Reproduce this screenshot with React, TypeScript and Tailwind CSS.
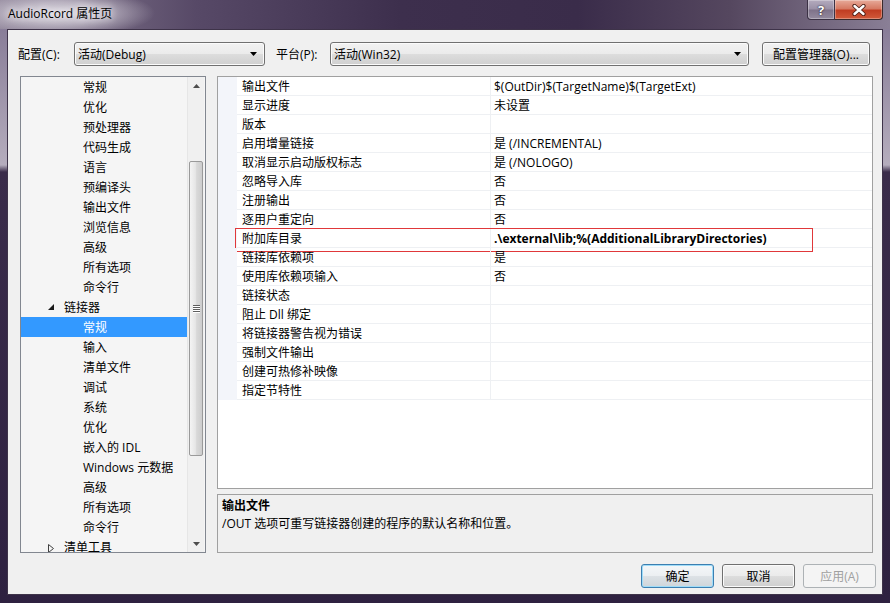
import React from "react";

const FONT = "font-['Open_Sans','Noto_Sans_CJK_SC',sans-serif]";

type TreeItem = { label: string; depth: 1 | 2; open?: boolean; active?: boolean };

const treeItems: TreeItem[] = [
  { label: "常规", depth: 2 },
  { label: "优化", depth: 2 },
  { label: "预处理器", depth: 2 },
  { label: "代码生成", depth: 2 },
  { label: "语言", depth: 2 },
  { label: "预编译头", depth: 2 },
  { label: "输出文件", depth: 2 },
  { label: "浏览信息", depth: 2 },
  { label: "高级", depth: 2 },
  { label: "所有选项", depth: 2 },
  { label: "命令行", depth: 2 },
  { label: "链接器", depth: 1, open: true },
  { label: "常规", depth: 2, active: true },
  { label: "输入", depth: 2 },
  { label: "清单文件", depth: 2 },
  { label: "调试", depth: 2 },
  { label: "系统", depth: 2 },
  { label: "优化", depth: 2 },
  { label: "嵌入的 IDL", depth: 2 },
  { label: "Windows 元数据", depth: 2 },
  { label: "高级", depth: 2 },
  { label: "所有选项", depth: 2 },
  { label: "命令行", depth: 2 },
  { label: "清单工具", depth: 1, open: false },
];

const props: [string, string][] = [
  ["输出文件", "$(OutDir)$(TargetName)$(TargetExt)"],
  ["显示进度", "未设置"],
  ["版本", ""],
  ["启用增量链接", "是 (/INCREMENTAL)"],
  ["取消显示启动版权标志", "是 (/NOLOGO)"],
  ["忽略导入库", "否"],
  ["注册输出", "否"],
  ["逐用户重定向", "否"],
  ["附加库目录", ".\\external\\lib;%(AdditionalLibraryDirectories)"],
  ["链接库依赖项", "是"],
  ["使用库依赖项输入", "否"],
  ["链接状态", ""],
  ["阻止 Dll 绑定", ""],
  ["将链接器警告视为错误", ""],
  ["强制文件输出", ""],
  ["创建可热修补映像", ""],
  ["指定节特性", ""],
];

// row index in the grid that is being edited
const EDIT_ROW = 8;

function DropArrow() {
  return (
    <svg width="7" height="4" viewBox="0 0 7 4">
      <path d="M0 0h7L3.5 4z" fill="#000" />
    </svg>
  );
}

function Combo({ value, width }: { value: string; width: string }) {
  return (
    <div
      className={`flex h-[24px] ${width} items-center justify-between rounded-[3px] border border-[#707070] bg-[linear-gradient(180deg,#f2f2f2_0%,#ebebeb_49%,#dddddd_50%,#cfcfcf_100%)] pl-[3px] pr-[7px] shadow-[inset_0_0_0_1px_#fbfbfb]`}
    >
      <span className="pt-[2px] leading-[18px]">{value}</span>
      <DropArrow />
    </div>
  );
}

function PushButton({
  label,
  kind = "normal",
  width = "w-[73px]",
}: {
  label: string;
  kind?: "normal" | "default" | "disabled";
  width?: string;
}) {
  const look =
    kind === "disabled"
      ? "border-[#adb2b5] bg-[#f4f4f4] text-[#a0a0a0]"
      : kind === "default"
        ? "border-[#3c7fb1] bg-[linear-gradient(180deg,#f4f7f9_0%,#eceff2_49%,#dde2e6_50%,#cfd5da_100%)] shadow-[inset_0_0_0_1px_#9fdcf8] text-black"
        : "border-[#707070] bg-[linear-gradient(180deg,#f2f2f2_0%,#ebebeb_49%,#dddddd_50%,#cfcfcf_100%)] shadow-[inset_0_0_0_1px_#fbfbfb] text-black";
  return (
    <div className={`flex h-[24px] ${width} items-center justify-center rounded-[3px] border ${look}`}>
      <span className="pt-[1px] leading-[18px]">{label}</span>
    </div>
  );
}

function ScrollArrow({ up }: { up?: boolean }) {
  return (
    <div className="flex h-[17px] items-center justify-center">
      <svg width="7" height="4" viewBox="0 0 7 4">
        <path d={up ? "M0 4h7L3.5 0z" : "M0 0h7L3.5 4z"} fill="#4d4d4d" />
      </svg>
    </div>
  );
}

function TreeScrollbar() {
  return (
    <div className="flex w-[17px] shrink-0 flex-col border-l border-[#e6e6e6] bg-[#f0f0f0]">
      <ScrollArrow up />
      <div className="flex-1">
        <div className="mx-[1px] mt-[67px] flex h-[295px] items-center justify-center rounded-[2px] border border-[#9a9a9a] bg-[linear-gradient(90deg,#f4f4f4_0%,#e6e6e6_45%,#d9d9d9_55%,#cdcdcd_100%)]">
          <div className="flex flex-col gap-[1px]">
            {[0, 1, 2, 3].map((i) => (
              <div key={i} className="h-[1px] w-[7px] bg-[#5e5e5e] shadow-[0_1px_0_#ffffff]" />
            ))}
          </div>
        </div>
      </div>
      <ScrollArrow />
    </div>
  );
}

function TreeRow({ item }: { item: TreeItem }) {
  const textColor = item.active ? "text-white" : "text-black";
  return (
    <div
      className={`relative flex h-[20px] items-center ${item.active ? "bg-[#3399ff]" : ""} ${
        item.depth === 1 ? "pl-[43px]" : "pl-[62px]"
      }`}
    >
      {item.depth === 1 && (
        <div className="absolute left-[27px] top-[7px]">
          {item.open ? (
            <svg width="6" height="6" viewBox="0 0 6 6">
              <path d="M6 0v6H0z" fill="#1a1a1a" />
            </svg>
          ) : (
            <svg width="6" height="9" viewBox="0 0 6 9">
              <path d="M0.5 0.5v8l5-4z" fill="none" stroke="#404040" />
            </svg>
          )}
        </div>
      )}
      <span className={`whitespace-nowrap pt-[2px] leading-[18px] ${textColor}`}>{item.label}</span>
    </div>
  );
}

function TreePanel() {
  return (
    <div className="flex h-[477px] w-[186px] shrink-0 border border-[#828790] bg-[#f5f5f5]">
      <div className="w-[166px] overflow-hidden">
        {treeItems.map((item, i) => (
          <TreeRow key={i} item={item} />
        ))}
      </div>
      <TreeScrollbar />
    </div>
  );
}

function PropertyGrid() {
  return (
    <div className="h-[413px] border border-[#a0a0a0] bg-white">
      {props.map(([name, value], i) => (
        <div key={i} className="relative flex h-[19px]">
          <div className="w-[19px] shrink-0 bg-[#f3f5fa]" />
          <div className="w-[254px] shrink-0 whitespace-nowrap border-b border-r border-[#eef0f3] pl-[5px] pt-[1px] leading-[18px]">
            {name}
          </div>
          <div
            className={`flex-1 whitespace-nowrap border-b border-[#eef0f3] pl-[3px] pt-[1px] leading-[18px] ${
              i === EDIT_ROW ? "font-bold" : ""
            }`}
          >
            {value}
          </div>
          {i === EDIT_ROW && (
            <div className="pointer-events-none absolute left-[17px] top-[-1px] h-[24px] w-[578px] border border-[#e0383a]" />
          )}
        </div>
      ))}
    </div>
  );
}

function TitleBar() {
  return (
    <div className="flex h-[29px] items-start justify-between bg-[radial-gradient(ellipse_95px_24px_at_60px_13px,rgba(226,222,230,0.95)_0%,rgba(226,222,230,0.6)_45%,rgba(226,222,230,0)_100%),linear-gradient(90deg,#8e8398_0%,#574967_22%,#3d2f4d_45%,#3a2c4a_65%,#55475f_82%,#8a7f96_100%)]">
      <div className="pl-[8px] pt-[6px] text-[12px] leading-[16px] text-black [text-shadow:0_0_6px_#f2f0f4,0_0_10px_#f2f0f4]">
        AudioRcord 属性页
      </div>
      <div className="mr-[7px] flex h-[20px]">
        <div className="flex w-[28px] items-center justify-center rounded-bl-[4px] border border-t-0 border-[#3b3144] bg-[linear-gradient(180deg,#b4abbe_0%,#9a90a6_48%,#7e7289_52%,#948a9f_100%)] shadow-[inset_0_0_0_1px_rgba(255,255,255,0.3)]">
          <span className="text-[13px] font-bold leading-[14px] text-white [text-shadow:0_0_2px_#2b2233,0_0_1px_#2b2233]">
            ?
          </span>
        </div>
        <div className="flex w-[48px] items-center justify-center rounded-br-[4px] border border-l-0 border-t-0 border-[#3b2a2a] bg-[linear-gradient(180deg,#e7aa99_0%,#d67a63_45%,#c13d22_55%,#d25a3a_100%)] shadow-[inset_0_0_0_1px_rgba(255,255,255,0.3)]">
          <svg width="14" height="12" viewBox="0 0 14 12">
            <path d="M2.5 2l9 8M11.5 2l-9 8" stroke="#4a1d14" strokeWidth="4.2" strokeLinecap="round" />
            <path d="M2.5 2l9 8M11.5 2l-9 8" stroke="#ffffff" strokeWidth="2.4" strokeLinecap="round" />
          </svg>
        </div>
      </div>
    </div>
  );
}

export default function App() {
  return (
    <div
      className={`${FONT} h-[603px] w-[890px] overflow-hidden bg-[linear-gradient(180deg,#7f7390_0px,#b5adbd_165px,#3a2c4a_172px,#2e2140_100%)] text-[12px] text-black`}
    >
      <TitleBar />

      <div className="mx-[7px] h-[566px] border border-[#3e3349] bg-[#f0f0f0]">
        {/* configuration / platform selectors */}
        <div className="mt-[12px] flex h-[24px] items-center pl-[10px]">
          <span className="w-[56px] pt-[2px] leading-[18px]">配置(C):</span>
          <Combo value="活动(Debug)" width="w-[191px]" />
          <span className="ml-[11px] w-[54px] pt-[2px] leading-[18px]">平台(P):</span>
          <Combo value="活动(Win32)" width="w-[419px]" />
          <div className="ml-[13px]">
            <PushButton label="配置管理器(O)..." width="w-[108px]" />
          </div>
        </div>

        <div className="mt-[10px] flex pl-[12px]">
          <TreePanel />
          <div className="ml-[11px] w-[656px]">
            <PropertyGrid />
            <div className="mt-[5px] h-[59px] border border-[#a0a0a0] bg-[#f0f0f0] px-[4px] pt-[2px]">
              <div className="font-bold leading-[18px]">输出文件</div>
              <div className="leading-[18px]">/OUT 选项可重写链接器创建的程序的默认名称和位置。</div>
            </div>
          </div>
        </div>

        <div className="mt-[11px] flex justify-end gap-[8px] pr-[6px]">
          <PushButton label="确定" kind="default" />
          <PushButton label="取消" />
          <PushButton label="应用(A)" kind="disabled" />
        </div>
      </div>
    </div>
  );
}
